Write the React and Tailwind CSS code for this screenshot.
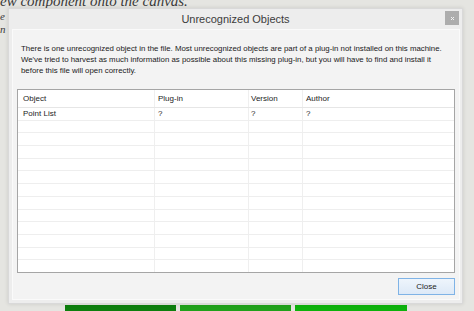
import React from 'react';

const columns = [
  { key: 'object', label: 'Object', pad: 'pl-[5px]' },
  { key: 'plugin', label: 'Plug-in', pad: 'pl-[3px]' },
  { key: 'version', label: 'Version', pad: 'pl-[2px]' },
  { key: 'author', label: 'Author', pad: 'pl-[3px]' },
];

const rows = [
  { object: 'Point List', plugin: '?', version: '?', author: '?' },
  ...Array.from({ length: 12 }, () => ({ object: '', plugin: '', version: '', author: '' })),
];

const bars = ['w-[111px] bg-[#0d7f0e]', 'w-[111px] bg-[#20a11b]', 'w-[112px] bg-[#0db20c]'];

function ObjectTable() {
  return (
    <div className="mx-[4px] h-[184px] border border-[#a5a5a5] bg-white overflow-hidden">
      <div className="grid grid-cols-[137px_94px_54px_1fr] h-[18px] border-b border-[#e6e6e6]">
        {columns.map((c, i) => (
          <div
            key={c.key}
            className={`${c.pad} flex items-center ${i < 3 ? 'border-r border-[#efefef]' : ''}`}
          >
            {c.label}
          </div>
        ))}
      </div>
      {rows.map((r, idx) => (
        <div key={idx} className="grid grid-cols-[137px_94px_54px_1fr] h-[12.7px] border-b border-[#eeeeee]">
          {columns.map((c, i) => (
            <div
              key={c.key}
              className={`${c.pad} flex items-center leading-none ${i < 3 ? 'border-r border-[#efefef]' : ''}`}
            >
              {r[c.key]}
            </div>
          ))}
        </div>
      ))}
    </div>
  );
}

export default function App() {
  return (
    <div className="relative w-[474px] h-[311px] overflow-hidden bg-[#e5e5e1] font-['Liberation_Sans',Arial,sans-serif] text-[#1c1c1c]">
      {/* canvas behind the dialog */}
      <div className="h-full flex flex-col">
        <div className="mt-[-7px] font-['Liberation_Serif',serif] italic text-[#3a3a3a] leading-[13px]">
          <div className="text-[15px] leading-[17px] whitespace-nowrap">ew component onto the canvas.</div>
          <div className="text-[11px]">e</div>
          <div className="text-[11px]">n</div>
        </div>
        <div className="mt-auto flex gap-[4px] h-[6px] pl-[65px]">
          {bars.map((b, i) => (
            <div key={i} className={b} />
          ))}
        </div>
      </div>

      {/* dialog window */}
      <div className="absolute left-[8px] top-[8px] w-[455px] h-[296px] flex flex-col bg-[#ededed] border border-[#d9d9d9] shadow-[0_0_4px_rgba(0,0,0,0.12)]">
        <div className="relative h-[20px] flex items-center justify-center text-[11px] text-[#3c3c3c]">
          Unrecognized Objects
          <div className="absolute right-[3px] top-[2px] w-[14px] h-[14px] bg-[#adadad] flex items-center justify-center">
            <svg width="5" height="5" viewBox="0 0 5 5">
              <path d="M1 1L4 4M4 1L1 4" stroke="#f2f2f2" strokeWidth="1" />
            </svg>
          </div>
        </div>
        <div className="ml-[3px] mr-[2px] mb-[3px] flex-1 flex flex-col bg-[#f3f3f3] border border-[#fafafa] pt-[13px] text-[8px]">
          <p className="px-[8px] leading-[11px] text-[7.85px] text-[#1a1a1a]">
            There is one unrecognized object in the file. Most unrecognized objects are part of a plug-in not installed on this machine.
            <br />
            We've tried to harvest as much information as possible about this missing plug-in, but you will have to find and install it
            <br />
            before this file will open correctly.
          </p>
          <div className="mt-[13px]">
            <ObjectTable />
          </div>
          <div className="mt-[5px] flex justify-end pr-[4px]">
            <button className="w-[57px] h-[17px] border border-[#7fb3e6] bg-gradient-to-b from-[#eef5fc] to-[#dde9f7] text-[8px] text-[#1c1c1c] flex items-center justify-center">
              Close
            </button>
          </div>
        </div>
      </div>
    </div>
  );
}
